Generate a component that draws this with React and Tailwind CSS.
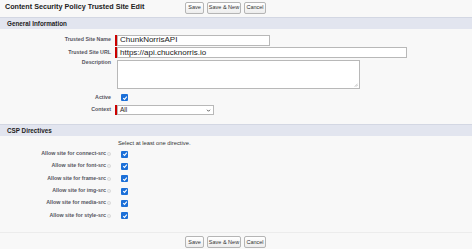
import React from 'react';

const Check = () => (
  <span className="w-[7px] h-[7px] rounded-[1px] bg-[#1b6fd8] flex items-center justify-center">
    <svg viewBox="0 0 10 10" className="w-[6px] h-[6px]">
      <path d="M2 5.2 L4.2 7.3 L8 2.8" fill="none" stroke="white" strokeWidth="1.8" />
    </svg>
  </span>
);

const Info = () => (
  <svg viewBox="0 0 10 10" className="w-[4px] h-[4px] ml-[1px] shrink-0">
    <circle cx="5" cy="5" r="4" fill="none" stroke="#bdbdbd" strokeWidth="1.2" />
    <path d="M5 4.2 V7.3" stroke="#bdbdbd" strokeWidth="1.2" />
    <circle cx="5" cy="2.8" r="0.7" fill="#bdbdbd" />
  </svg>
);

const Btn = ({ children, w }) => (
  <button className={`${w} h-[12px] border border-[#b5b5b5] rounded-[2px] bg-gradient-to-b from-white to-[#ededed] text-[5.5px] text-[#333] flex items-center justify-center`}>
    {children}
  </button>
);

const Buttons = () => (
  <div className="flex items-center gap-[3px]">
    <Btn w="w-[19px]">Save</Btn>
    <Btn w="w-[34px]">Save &amp; New</Btn>
    <Btn w="w-[22px]">Cancel</Btn>
  </div>
);

const Row = ({ label, h = 'h-[12.5px]', align = 'items-center', info, children }) => (
  <div className={`flex ${align} ${h}`}>
    <div className="w-[111px] flex items-center justify-end text-[5.3px] font-bold text-[#555560] whitespace-nowrap">
      {label}
      {info && <Info />}
    </div>
    <div className="ml-[4px] flex items-center">{children}</div>
  </div>
);

const Req = ({ children, w }) => (
  <div className="flex items-stretch h-[11px]">
    <span className="w-[2px] bg-[#c00]" />
    <div className={`${w} border border-[#b8b8b8] bg-white flex items-center px-[2px] text-[8px] text-[#222] leading-none`}>
      {children}
    </div>
  </div>
);

const Header = ({ children }) => (
  <div className="h-[12px] bg-[#e2e5ef] border-t border-[#d3d7e3] flex items-center pl-[7px] text-[6.3px] font-bold text-[#222]">
    {children}
  </div>
);

const directives = ['connect-src', 'font-src', 'frame-src', 'img-src', 'media-src', 'style-src'];

export default function App() {
  return (
    <div className="w-[474px] h-[249px] bg-white overflow-hidden font-['Liberation_Sans',Arial,sans-serif]">
      <div className="w-[472px] h-full bg-[#f8f8f8] flex flex-col">
        <div className="h-[17px] flex items-center pb-[2px]">
          <div className="w-[185px] pl-[5px] text-[7.2px] font-bold text-[#222] whitespace-nowrap">
            Content Security Policy Trusted Site Edit
          </div>
          <Buttons />
        </div>

        <Header>General Information</Header>
        <div className="pt-[5px] flex flex-col gap-[0.5px]">
          <Row label="Trusted Site Name" h="h-[12px]">
            <Req w="w-[153px]">ChunkNorrisAPI</Req>
          </Row>
          <Row label="Trusted Site URL" h="h-[12px]">
            <Req w="w-[290px]">https://api.chucknorris.io</Req>
          </Row>
          <Row label="Description" h="h-[32px]" align="items-start">
            <div className="ml-[2px] mt-[1px] relative w-[243px] h-[29px] border border-[#b8b8b8] bg-white">
              <svg viewBox="0 0 6 6" className="absolute right-[1px] bottom-[1px] w-[4px] h-[4px]">
                <path d="M1 5.5 L5.5 1 M3 5.5 L5.5 3" stroke="#999" strokeWidth="0.8" />
              </svg>
            </div>
          </Row>
          <Row label="Active" h="h-[12px]">
            <span className="ml-[6px]"><Check /></span>
          </Row>
          <Row label="Context" h="h-[12px]">
            <div className="flex items-stretch h-[10px]">
              <span className="w-[2px] bg-[#c00]" />
              <div className="w-[97px] border border-[#b8b8b8] bg-white flex items-center justify-between px-[2px] text-[6.5px] text-[#222] leading-none">
                All
                <svg viewBox="0 0 10 10" className="w-[5px] h-[5px]">
                  <path d="M2 3.5 L5 6.5 L8 3.5" fill="none" stroke="#333" strokeWidth="1.6" />
                </svg>
              </div>
            </div>
          </Row>
        </div>

        <div className="mt-[8px]">
          <Header>CSP Directives</Header>
        </div>
        <div className="pt-[3px]">
          <div className="pl-[118px] h-[9px] flex items-center text-[5.8px] text-[#333]">
            Select at least one directive.
          </div>
          <div className="flex flex-col">
            {directives.map((d) => (
              <Row key={d} label={`Allow site for ${d}`} info h="h-[12.3px]">
                <span className="ml-[6px]"><Check /></span>
              </Row>
            ))}
          </div>
        </div>

        <div className="mt-auto border-t border-[#ececec] h-[17px] flex items-center pl-[185px] pt-[2px]">
          <Buttons />
        </div>
      </div>
    </div>
  );
}
